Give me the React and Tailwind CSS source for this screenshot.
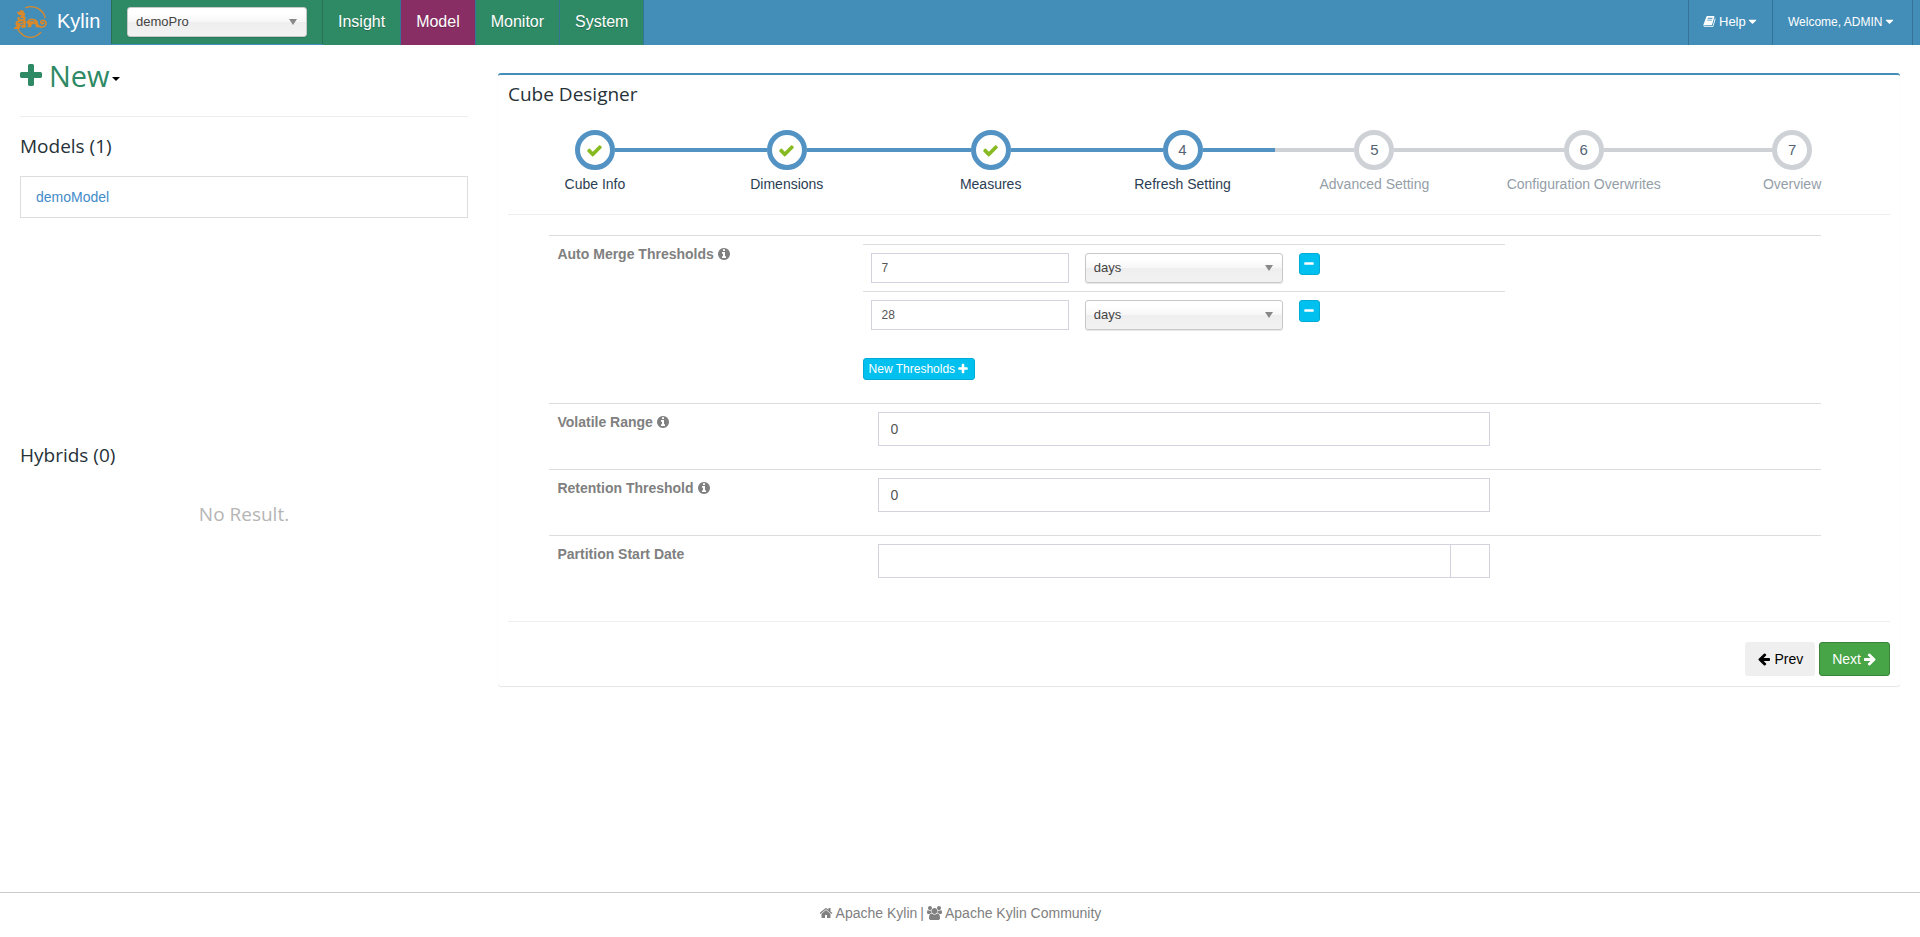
import { useState } from "react";

const ICONS = {
  plus: "M1600 736v192q0 40-28 68t-68 28h-416v416q0 40-28 68t-68 28h-192q-40 0-68-28t-28-68v-416h-416q-40 0-68-28t-28-68v-192q0-40 28-68t68-28h416v-416q0-40 28-68t68-28h192q40 0 68 28t28 68v416h416q40 0 68 28t28 68z",
  minus: "M1600 736v192q0 40-28 68t-68 28h-1216q-40 0-68-28t-28-68v-192q0-40 28-68t68-28h1216q40 0 68 28t28 68z",
  info: "M1152 1376v-160q0-14-9-23t-23-9h-96v-512q0-14-9-23t-23-9h-320q-14 0-23 9t-9 23v160q0 14 9 23t23 9h96v320h-96q-14 0-23 9t-9 23v160q0 14 9 23t23 9h448q14 0 23-9t9-23zm-128-896v-160q0-14-9-23t-23-9h-192q-14 0-23 9t-9 23v160q0 14 9 23t23 9h192q14 0 23-9t9-23zm640 416q0 209-103 385.5t-279.5 279.5-385.5 103-385.5-103-279.5-279.5-103-385.5 103-385.5 279.5-279.5 385.5-103 385.5 103 279.5 279.5 103 385.5z",
  check: "M1671 566q0 40-28 68l-724 724-136 136q-28 28-68 28t-68-28l-136-136-362-362q-28-28-28-68t28-68l136-136q28-28 68-28t68 28l294 295 656-657q28-28 68-28t68 28l136 136q28 28 28 68z",
  caret: "M1408 704q0 26-19 45l-448 448q-19 19-45 19t-45-19l-448-448q-19-19-19-45t19-45 45-19h896q26 0 45 19t19 45z",
  left: "M1664 896v128q0 53-32.5 90.5t-84.5 37.5h-704l293 294q38 36 38 90t-38 90l-75 76q-37 37-90 37-52 0-91-37l-651-652q-37-37-37-90 0-52 37-91l651-650q38-38 91-38 52 0 90 38l75 74q38 38 38 91t-38 91l-293 293h704q52 0 84.5 37.5t32.5 90.5z",
  right: "M1600 960q0 54-37 91l-651 651q-39 37-91 37-51 0-90-37l-75-75q-38-38-38-91t38-91l293-293h-704q-52 0-84.5-37.5t-32.5-90.5v-128q0-53 32.5-90.5t84.5-37.5h704l-293-294q-38-36-38-90t38-90l75-75q38-38 90-38 53 0 91 38l651 651q37 35 37 90z",
  home: "M1472 992v480q0 26-19 45t-45 19h-384v-384h-256v384h-384q-26 0-45-19t-19-45v-480q0-1 .5-3t.5-3l575-474 575 474q1 2 1 6zm223-69l-62 74q-8 9-21 11h-3q-13 0-21-7l-692-577-692 577q-12 8-24 7-13-2-21-11l-62-74q-8-10-7-23.5t11-21.5l719-599q32-26 76-26t76 26l244 204v-195q0-14 9-23t23-9h192q14 0 23 9t9 23v408l219 182q10 8 11 21.5t-7 23.5z",
  users: "M593 896q-162 5-265 128h-134q-82 0-138-40.5t-56-118.5q0-353 124-353 6 0 43.5 21t97.5 42.5 119 21.5q67 0 133-23-5 37-5 66 0 139 81 256zm1071 637q0 120-73 189.5t-194 69.5h-874q-121 0-194-69.5t-73-189.5q0-53 3.5-103.5t14-109 26.5-108.5 43-97.5 62-81 85.5-53.5 111.5-20q10 0 43 21.5t73 48 107 48 135 21.5 135-21.5 107-48 73-48 43-21.5q61 0 111.5 20t85.5 53.5 62 81 43 97.5 26.5 108.5 14 109 3.5 103.5zm-1024-1277q0 106-75 181t-181 75-181-75-75-181 75-181 181-75 181 75 75 181zm704 384q0 159-112.5 271.5t-271.5 112.5-271.5-112.5-112.5-271.5 112.5-271.5 271.5-112.5 271.5 112.5 112.5 271.5zm576 225q0 78-56 118.5t-138 40.5h-134q-103-123-265-128 81-117 81-256 0-29-5-66 66 23 133 23 59 0 119-21.5t97.5-42.5 43.5-21q124 0 124 353zm-128-609q0 106-75 181t-181 75-181-75-75-181 75-181 181-75 181 75 75 181z",
  book: "M1703 478q40 57 18 129l-275 906q-19 64-76.5 107.5t-122.5 43.5h-923q-77 0-148.5-53.5t-99.5-131.5q-24-67-2-127 0-4 3-27t4-37q1-8-3-21.5t-3-19.5q2-11 8-21t16.5-23.5 16.5-23.5q23-38 45-91.5t30-91.5q3-10 .5-30t-.5-28q3-11 17-28t17-23q21-36 42-92t25-90q1-9-2.5-32t.5-28q4-13 22-30.5t22-22.5q19-26 42.5-84.5t27.5-96.5q1-8-3-25.5t-2-26.5q2-8 9-18t18-23 17-21q8-12 16.5-30.5t15-35 16-36 19.5-32 26.5-23.5 36-11.5 47.5 5.5l-1 3q38-9 51-9h761q74 0 114 56t18 130l-274 906q-36 119-71.5 153.5t-128.5 34.5h-869q-27 0-38 15-11 16-1 43 24 70 144 70h923q29 0 56-15.5t35-41.5l300-987q7-22 5-57 38 15 59 43zm-1064 2q-4 13 2 22.5t20 9.5h608q13 0 25.5-9.5t16.5-22.5l21-64q4-13-2-22.5t-20-9.5h-608q-13 0-25.5 9.5t-16.5 22.5zm-83 256q-4 13 2 22.5t20 9.5h608q13 0 25.5-9.5t16.5-22.5l21-64q4-13-2-22.5t-20-9.5h-608q-13 0-25.5 9.5t-16.5 22.5z",
};

function Icon({ name, className = "size-3.5" }) {
  return (
    <svg
      viewBox={name === "users" ? "0 0 1920 1792" : "0 0 1792 1792"}
      fill="currentColor"
      aria-hidden="true"
      className={`inline-block shrink-0 ${className}`}
    >
      <path d={ICONS[name]} />
    </svg>
  );
}

function Logo() {
  return (
    <svg viewBox="0 0 132 120" aria-hidden="true" className="mt-0.5 h-10 w-11 shrink-0 text-[#d8892b]">
      <g fill="none" stroke="currentColor" strokeLinecap="round">
        <path d="M53 17Q76 9 94 22Q109 32 111 47" strokeWidth="4" />
        <path d="M30 83Q44 106 68 106Q88 104 98 91" strokeWidth="4" />
        <path d="M90 70Q96 76 104 75Q115 72 114 61Q110 52 101 56Q96 61 101 65Q106 66 106 62" strokeWidth="5" />
      </g>
      <path
        fill="currentColor"
        d="M29 36L27 29L34 30L37 23L41 26L46 24L47 31L52 35L49 42L54 48L51 54L56 60L52 67L55 74L48 78H40L42 71L37 74L34 81H16L21 75L26 73L22 66L24 58L31 56L27 49L32 44L38 45L41 40L34 40Z"
      />
      <path
        fill="currentColor"
        d="M58 56Q66 47 79 51Q90 54 90 62Q89 68 95 76H82L84 70L78 65Q69 66 70 76H58L61 68Q54 64 58 56Z"
      />
      <path fill="none" stroke="#438eb9" strokeWidth="3" d="M33 48L45 51M31 62L45 59M37 68L47 66M66 57Q73 53 79 58" />
    </svg>
  );
}

const NAV = ["Insight", "Model", "Monitor", "System"];

const STEPS = [
  { label: "Cube Info", state: "done", grow: "flex-[174]" },
  { label: "Dimensions", state: "done", grow: "flex-[210]" },
  { label: "Measures", state: "done", grow: "flex-[198]" },
  { label: "Refresh Setting", state: "active", grow: "flex-[186]" },
  { label: "Advanced Setting", state: "todo", grow: "flex-[198]" },
  { label: "Configuration Overwrites", state: "todo", grow: "flex-[221]" },
  { label: "Overview", state: "todo", grow: "flex-[196]" },
];

function ChosenSelect({ label, value, options, onChange }) {
  return (
    <div className="relative">
      <select
        aria-label={label}
        value={value}
        onChange={(e) => onChange(e.target.value)}
        className="block h-[30px] w-full appearance-none rounded-[3px] border border-[#c8c8c8] bg-[linear-gradient(#fff_20%,#f6f6f6_50%,#eee_52%,#f2f2f2_100%)] px-2 text-[13px] text-[#444] shadow-[0_1px_1px_rgba(0,0,0,0.1)]"
      >
        {options.map((o) => (
          <option key={o}>{o}</option>
        ))}
      </select>
      <svg viewBox="0 0 8 6" aria-hidden="true" className="pointer-events-none absolute top-3 right-2.5 h-1.5 w-2">
        <path d="M0 0H8L4 6Z" fill="#888" />
      </svg>
    </div>
  );
}

function Header() {
  const [project, setProject] = useState("demoPro");
  return (
    <header className="flex h-[45px] bg-[#438eb9] text-white">
      <a href="#" className="flex w-[111px] gap-[5px] pl-2 text-xl leading-9">
        <Logo />
        <span className="pt-[3px]">Kylin</span>
      </a>
      <nav className="flex text-base">
        <div className="h-11 w-[212px] border-x border-[#2a7055] bg-[#2e8965] px-[15px] pt-[7px]">
          <ChosenSelect label="Project" value={project} options={["demoPro"]} onChange={setProject} />
        </div>
        {NAV.map((item) => (
          <a
            key={item}
            href="#"
            className={`border-r border-[#337596] px-[15px] leading-[43px] [text-shadow:0_1px_0_rgba(0,0,0,0.25)] ${
              item === "Model" ? "bg-[#892e65]" : "bg-[#2e8965]"
            }`}
          >
            {item}
          </a>
        ))}
      </nav>
      <div className="mr-[7px] ml-auto flex text-[13px] [text-shadow:0_1px_0_rgba(0,0,0,0.25)]">
        <button type="button" className="flex w-[84px] items-center border-l border-[#357396] pb-0.5 pl-3.5">
          <Icon name="book" className="size-[13px]" />
          <span className="ml-[3px]">Help</span>
          <Icon name="caret" className="size-[13px]" />
        </button>
        <button type="button" className="flex w-[141px] items-center gap-px border-x border-[#357396] pb-0.5 pl-[15px] text-xs">
          <span>Welcome, ADMIN</span>
          <Icon name="caret" className="size-[13px]" />
        </button>
      </div>
    </header>
  );
}

function Sidebar() {
  return (
    <aside>
      <button type="button" className="flex h-[43px] items-center text-[#2e8965]">
        <Icon name="plus" className="-ml-[3px] size-7" />
        <span className="ml-1 font-['Open_Sans',sans-serif] text-[29px] leading-10">New</span>
        <svg viewBox="0 0 8 4" aria-hidden="true" className="mt-1.5 ml-0.5 h-1 w-2">
          <path d="M0 0H8L4 4Z" fill="#000" />
        </svg>
      </button>
      <hr className="mt-[19px] border-[#eee]" />
      <h3 className="mt-4 font-['Open_Sans',sans-serif] text-[19px] leading-[26px] text-[#263238]">Models (1)</h3>
      <ul className="mt-[17px] border border-[#ddd]">
        <li className="px-[15px] leading-10">
          <a href="#" className="text-sm text-[#428bca]">
            demoModel
          </a>
        </li>
      </ul>
      <h3 className="mt-56 font-['Open_Sans',sans-serif] text-[19px] leading-[26px] text-[#263238]">Hybrids (0)</h3>
      <p className="mt-[33px] text-center font-['Open_Sans',sans-serif] text-[19px] leading-[26px] text-[#b5b5b5]">
        No Result.
      </p>
    </aside>
  );
}

function Steps() {
  return (
    <ol className="mt-[23px] flex">
      {STEPS.map((step, i) => {
        const reached = step.state !== "todo";
        const line = reached ? "bg-[#5293c4]" : "bg-[#ced1d6]";
        return (
          <li key={step.label} className={`${step.grow} min-w-0`}>
            <div className="flex items-center">
              <span className={`h-1 flex-1 ${i > 0 ? line : ""}`} />
              <span
                className={`flex size-10 items-center justify-center rounded-full border-[5px] text-[15px] text-[#546474] ${
                  reached ? "border-[#5293c4]" : "border-[#ced1d6]"
                }`}
              >
                {step.state === "done" ? (
                  <Icon name="check" className="size-[17px] text-[#87ba21]" />
                ) : (
                  i + 1
                )}
              </span>
              <span className={`h-1 flex-1 ${i < STEPS.length - 1 ? line : ""}`} />
            </div>
            <div
              className={`mt-1 text-center text-sm leading-5 whitespace-nowrap ${
                reached ? "text-[#2b3d53]" : "text-[#949ea7]"
              }`}
            >
              {step.label}
            </div>
          </li>
        );
      })}
    </ol>
  );
}

function Row({ label, id, info, children }) {
  return (
    <tr className="border-t border-[#ddd] align-top">
      <th scope="row" className="w-[24%] px-2 pt-2 text-left text-sm leading-5 font-bold text-[#808080]">
        <label htmlFor={id}>{label}</label>
        {info && <Icon name="info" className="ml-[3px] size-3.5 align-[-2px]" />}
      </th>
      <td className="px-2 pt-2 pb-[23px]">
        <div className="w-[67.6%]">{children}</div>
      </td>
    </tr>
  );
}

function NumberField({ id }) {
  const [value, setValue] = useState("0");
  return (
    <div className="px-[15px]">
      <input
        id={id}
        value={value}
        onChange={(e) => setValue(e.target.value)}
        className="block h-[34px] w-full border border-[#d2d3de] px-3 text-sm text-[#555]"
      />
    </div>
  );
}

function Thresholds() {
  const [rows, setRows] = useState([
    { count: "7", unit: "days" },
    { count: "28", unit: "days" },
  ]);
  const update = (i, patch) => setRows(rows.map((r, n) => (n === i ? { ...r, ...patch } : r)));

  return (
    <>
      <table className="w-full table-fixed">
        <tbody>
          {rows.map((row, i) => (
            <tr key={i} className="border-t border-[#ddd] align-top">
              <td className="p-2">
                <input
                  id={i === 0 ? "thresholds" : undefined}
                  aria-label={`Threshold ${i + 1}`}
                  value={row.count}
                  onChange={(e) => update(i, { count: e.target.value })}
                  className="block h-[30px] w-full border border-[#d2d3de] px-2.5 text-xs text-[#555]"
                />
              </td>
              <td className="p-2">
                <ChosenSelect
                  label={`Unit ${i + 1}`}
                  value={row.unit}
                  options={["days", "hours"]}
                  onChange={(unit) => update(i, { unit })}
                />
              </td>
              <td className="p-2">
                <button
                  type="button"
                  aria-label="Remove threshold"
                  onClick={() => setRows(rows.filter((_, n) => n !== i))}
                  className="flex h-[22px] w-[21px] items-center justify-center rounded-[3px] border border-[#00acd6] bg-[#00c0ef] text-white"
                >
                  <Icon name="minus" className="size-3" />
                </button>
              </td>
            </tr>
          ))}
        </tbody>
      </table>
      <button
        type="button"
        onClick={() => setRows([...rows, { count: "0", unit: "days" }])}
        className="mt-5 flex h-[22px] items-center gap-0.5 rounded-[3px] border border-[#00acd6] bg-[#00c0ef] px-[5px] text-xs text-white"
      >
        New Thresholds
        <Icon name="plus" className="size-3" />
      </button>
    </>
  );
}

function CubeDesigner() {
  const [startDate, setStartDate] = useState("");
  return (
    <main className="self-start rounded-[3px] border-t-2 border-[#438eb9] px-[10px] pb-2.5 shadow-[0_1px_1px_rgba(0,0,0,0.1)]">
      <h2 className="pt-1.5 font-['Open_Sans',sans-serif] text-[19px] leading-[26px] text-[#263238]">Cube Designer</h2>
      <Steps />
      <hr className="mt-5 border-[#eee]" />
      <table className="mt-5 ml-[3%] w-[92%] table-fixed">
        <tbody>
          <Row label="Auto Merge Thresholds" id="thresholds" info>
            <Thresholds />
          </Row>
          <Row label="Volatile Range" id="volatile" info>
            <NumberField id="volatile" />
          </Row>
          <Row label="Retention Threshold" id="retention" info>
            <NumberField id="retention" />
          </Row>
          <Row label="Partition Start Date" id="start-date">
            <div className="flex px-[15px]">
              <input
                id="start-date"
                value={startDate}
                onChange={(e) => setStartDate(e.target.value)}
                className="h-[34px] min-w-0 flex-1 border border-[#d2d3de] px-3 text-sm text-[#555]"
              />
              <button
                type="button"
                aria-label="Pick a date"
                className="h-[34px] w-[39px] border border-l-0 border-[#d2d3de]"
              />
            </div>
          </Row>
        </tbody>
      </table>
      <hr className="mt-5 border-[#eee]" />
      <div className="mt-5 flex justify-end gap-1 text-sm">
        <button type="button" className="flex h-[34px] items-center gap-[3px] rounded-[3px] bg-[#efefef] px-3 text-black">
          <Icon name="left" />
          Prev
        </button>
        <button
          type="button"
          className="flex h-[34px] items-center gap-0.5 rounded-[3px] border border-[#398439] bg-[#47a447] px-3 text-white"
        >
          Next
          <Icon name="right" />
        </button>
      </div>
    </main>
  );
}

export default function App() {
  return (
    <div className="flex min-h-screen flex-col bg-white font-['Liberation_Sans',Arial,sans-serif]">
      <Header />
      <div className="grid flex-1 grid-cols-[448fr_1402fr] gap-[30px] px-5">
        <div className="pt-[9px]">
          <Sidebar />
        </div>
        <div className="pt-7">
          <CubeDesigner />
        </div>
      </div>
      <footer className="flex h-[45px] items-start justify-center gap-[3px] border-t border-[#ccc] pt-2.5 text-sm leading-5 text-[#808080]">
        <a href="#" className="flex items-center gap-[3px]">
          <Icon name="home" />
          Apache Kylin
        </a>
        <span>|</span>
        <a href="#" className="flex items-center gap-[3px]">
          <Icon name="users" className="h-3.5 w-[15px]" />
          Apache Kylin Community
        </a>
      </footer>
    </div>
  );
}
